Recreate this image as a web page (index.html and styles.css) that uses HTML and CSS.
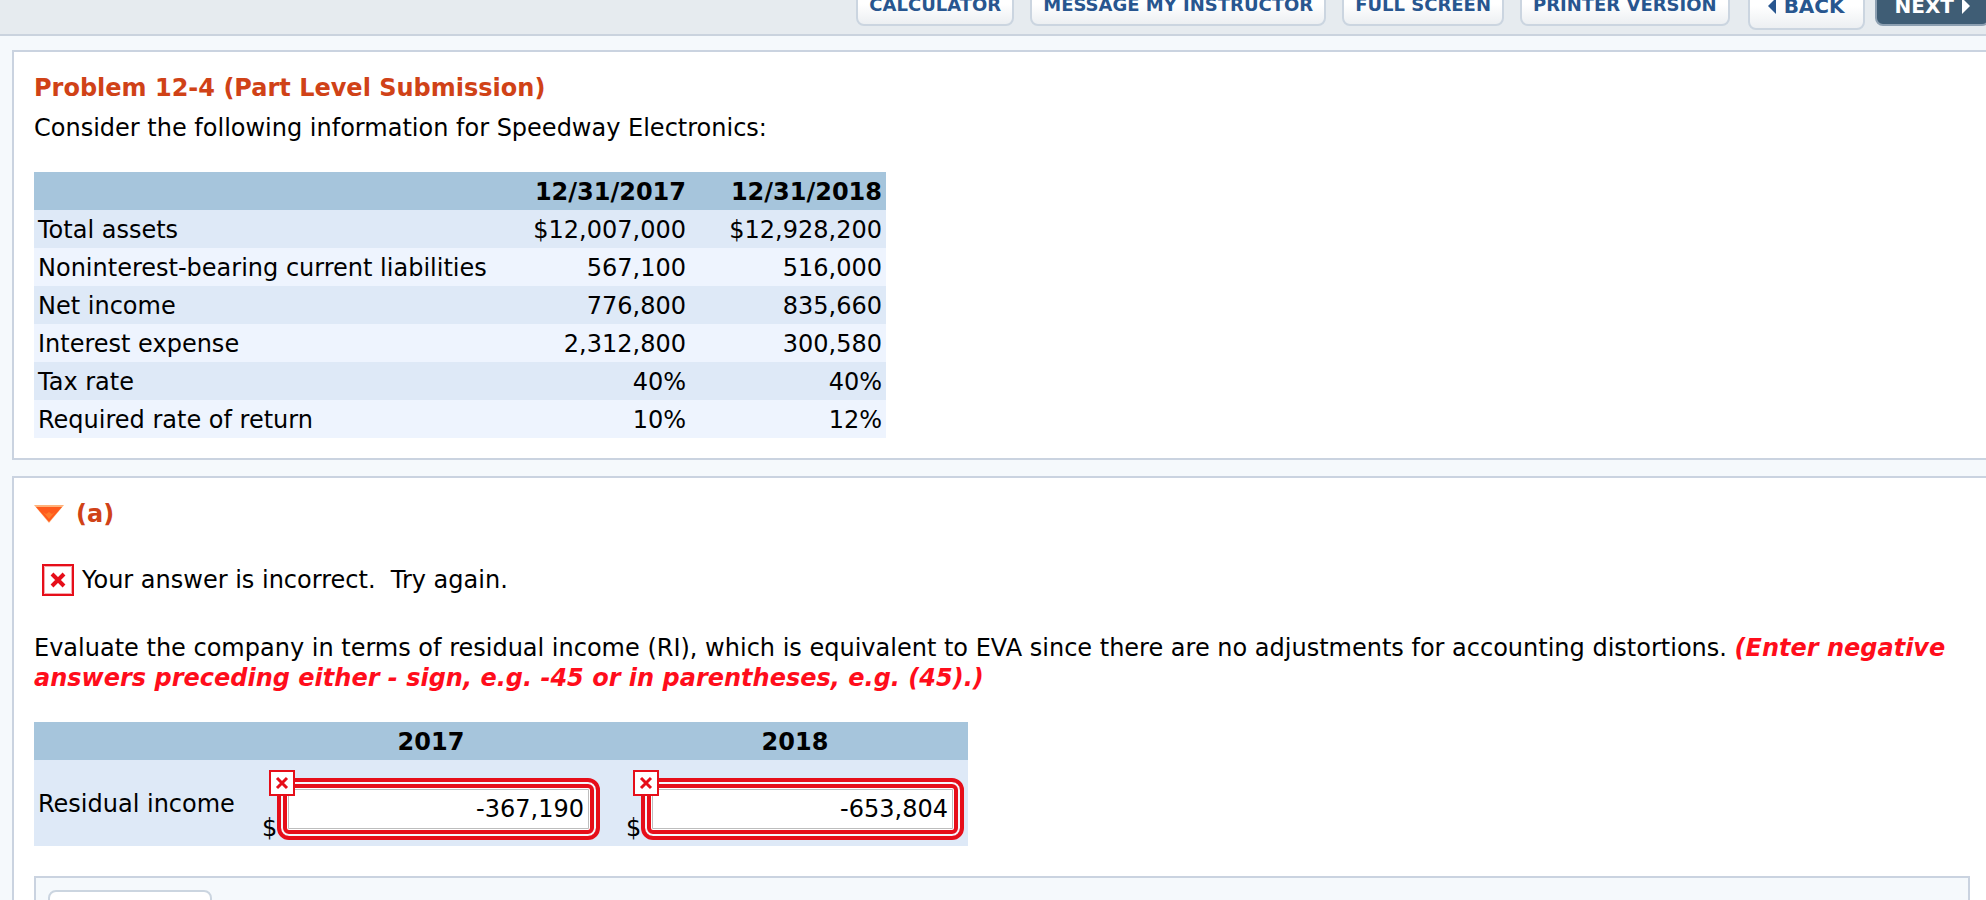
FILE: index.html
```html
<!DOCTYPE html>
<html lang="en">
  <head>
    <meta charset="UTF-8" />
    <meta name="viewport" content="width=device-width, initial-scale=1.0" />
    <title>Problem 12-4</title>
    <link rel="stylesheet" href="styles.css">
  </head>
  <body>
    <nav class="toolbar">
      <button type="button" class="tool">CALCULATOR</button>
      <button type="button" class="tool">MESSAGE MY INSTRUCTOR</button>
      <button type="button" class="tool">FULL SCREEN</button>
      <button type="button" class="tool">PRINTER VERSION</button>
      <button type="button" class="tool back">
        <svg width="8" height="16" viewBox="0 0 8 16"><path d="M8 0v16L0 8z" fill="currentColor" /></svg>
        BACK
      </button>
      <button type="button" class="tool next">
        NEXT
        <svg width="8" height="16" viewBox="0 0 8 16"><path d="M0 0v16l8-8z" fill="currentColor" /></svg>
      </button>
    </nav>

    <main class="content">
      <section class="panel">
        <h1 class="title">Problem 12-4 (Part Level Submission)</h1>
        <p class="intro">Consider the following information for Speedway Electronics:</p>

        <table class="data-table">
          <thead>
            <tr>
              <th></th>
              <th>12/31/2017</th>
              <th>12/31/2018</th>
            </tr>
          </thead>
          <tbody>
            <tr>
              <td>Total assets</td>
              <td>$12,007,000</td>
              <td>$12,928,200</td>
            </tr>
            <tr>
              <td>Noninterest-bearing current liabilities</td>
              <td>567,100</td>
              <td>516,000</td>
            </tr>
            <tr>
              <td>Net income</td>
              <td>776,800</td>
              <td>835,660</td>
            </tr>
            <tr>
              <td>Interest expense</td>
              <td>2,312,800</td>
              <td>300,580</td>
            </tr>
            <tr>
              <td>Tax rate</td>
              <td>40%</td>
              <td>40%</td>
            </tr>
            <tr>
              <td>Required rate of return</td>
              <td>10%</td>
              <td>12%</td>
            </tr>
          </tbody>
        </table>
      </section>

      <section class="panel">
        <h2 class="part">
          <svg width="30" height="18" viewBox="0 0 30 18">
            <path d="M0 0h30L15 18z" fill="#ffb27a" />
            <path d="M2 2h26L15 17z" fill="#ff5a1c" />
            <path d="M9 7l3 2 3-2 3 2 3-2-6 7z" fill="#ff7a2a" />
          </svg>
          (a)
        </h2>

        <p class="feedback">
          <svg width="32" height="32" viewBox="0 0 32 32">
            <path d="M1 1h30v30H1z" fill="#fff" stroke="#e60e19" stroke-width="2" />
            <path d="M2.500 2.500h27v27h-27z" fill="none" stroke="#f6a9ae" stroke-width="1" />
            <path d="M10 10l12 12M22 10L10 22" stroke="#e60e19" stroke-width="4" />
          </svg>
          Your answer is incorrect.&nbsp; Try again.
        </p>

        <p class="question">
          Evaluate the company in terms of residual income (RI), which is equivalent to EVA since there are no adjustments for accounting distortions.
          <em class="hint">(Enter negative answers preceding either - sign, e.g. -45 or in parentheses, e.g. (45).)</em>
        </p>

        <table class="answer-table">
          <thead>
            <tr>
              <th></th>
              <th id="y2017">2017</th>
              <th id="y2018">2018</th>
            </tr>
          </thead>
          <tbody>
            <tr>
              <td id="ri">Residual income</td>
              <td>
                <div class="answer">
                  <span class="currency">$</span>
                  <div class="field">
                    <input type="text" class="wrong" value="-367,190" aria-labelledby="ri y2017" />
                    <svg class="badge" width="26" height="26" viewBox="0 0 26 26">
                      <path d="M1 1h24v24H1z" fill="#fff" stroke="#e60e19" stroke-width="2" />
                      <path d="M8 8l10 10M18 8L8 18" stroke="#e60e19" stroke-width="3" />
                    </svg>
                  </div>
                </div>
              </td>
              <td>
                <div class="answer">
                  <span class="currency">$</span>
                  <div class="field">
                    <input type="text" class="wrong" value="-653,804" aria-labelledby="ri y2018" />
                    <svg class="badge" width="26" height="26" viewBox="0 0 26 26">
                      <path d="M1 1h24v24H1z" fill="#fff" stroke="#e60e19" stroke-width="2" />
                      <path d="M8 8l10 10M18 8L8 18" stroke="#e60e19" stroke-width="3" />
                    </svg>
                  </div>
                </div>
              </td>
            </tr>
          </tbody>
        </table>

        <div class="actions">
          <button type="button" class="action" aria-label="Save"></button>
        </div>
      </section>
    </main>
  </body>
</html>
```
FILE: styles.css
```css
* {
  box-sizing: border-box;
}

html {
  overflow-x: hidden;
  scrollbar-width: none;
}

body {
  margin: 0;
  background-color: #f5f9fc;
  color: #000;
  font-family: Verdana, "DejaVu Sans", sans-serif;
  font-size: 24px;
  line-height: 30px;
}

h1,
h2,
p {
  margin: 0;
}

/* Toolbar */
.toolbar {
  display: flex;
  justify-content: flex-end;
  align-items: flex-end;
  gap: 16px;
  height: 36px;
  margin-right: -4px;
  padding-bottom: 8px;
  border-bottom: 2px solid #cad3de;
  background-color: #e6ebef;
}

.tool {
  display: flex;
  flex-shrink: 0;
  align-items: center;
  gap: 8px;
  height: 44px;
  padding: 0 11px;
  border: 2px solid #cbd5e0;
  border-radius: 8px;
  background: linear-gradient(#fff 50%, #eceff2);
  color: #28568f;
  font-family: Verdana, "DejaVu Sans", sans-serif;
  font-size: 18px;
  font-weight: bold;
  white-space: nowrap;
  cursor: pointer;
}

.back,
.next {
  padding: 0 18px;
  font-size: 20px;
}

.back {
  height: 48px;
  margin: 0 0 -4px 2px;
}

.next {
  height: 40px;
  margin-left: -6px;
  border-color: #8da0b2;
  background: #3f5d75;
  color: #fff;
}

/* Panels */
.content {
  display: flex;
  flex-direction: column;
  gap: 16px;
  margin: 14px -6px 0 12px;
}

.panel {
  padding: 21px 20px 20px;
  border: 2px solid #cad3e0;
  background-color: #fff;
}

.title {
  color: #d04217;
  font-size: 24px;
}

.intro {
  margin: 10px 0 29px;
}

table {
  border-collapse: collapse;
}

th,
td {
  height: 38px;
  padding: 5px 4px 3px;
}

th {
  background-color: #a6c5dc;
}

tbody tr:nth-child(odd) {
  background-color: #dee9f7;
}

tbody tr:nth-child(even) {
  background-color: #eef4fe;
}

.data-table {
  width: 852px;
}

.data-table th,
.data-table td {
  text-align: right;
}

.data-table td:first-child {
  text-align: left;
}

.data-table th + th {
  width: 196px;
}

/* Part (a) */
.part {
  display: flex;
  align-items: center;
  gap: 12px;
  color: #d04217;
  font-size: 24px;
}

.feedback {
  display: flex;
  align-items: center;
  gap: 8px;
  margin: 35px 0 37px 8px;
}

.question {
  margin-bottom: 29px;
}

.hint {
  color: #ff0d1b;
  font-weight: bold;
}

.answer-table {
  width: 934px;
}

.answer-table th + th {
  width: 364px;
  padding-left: 22px;
}

.answer-table td + td {
  padding: 18px 4px 6px 22px;
}

.answer {
  display: flex;
  align-items: flex-end;
}

.currency {
  line-height: 24px;
}

.field {
  position: relative;
  flex: 1;
}

/* two red rings with a white gap, then the thin grey inner edge */
.wrong {
  display: block;
  width: 100%;
  height: 62px;
  padding: 0 12px;
  border: 4px solid #e60e19;
  border-radius: 12px;
  background-color: #fff;
  box-shadow: inset 0 0 0 2px #f4f6fb, inset 0 0 0 6px #e60e19,
    inset 0 0 0 7px #fff, inset 0 0 0 8px #bdbdbd;
  font-family: Verdana, "DejaVu Sans", sans-serif;
  font-size: 24px;
  text-align: right;
}

.badge {
  position: absolute;
  top: -8px;
  left: -8px;
}

.actions {
  margin-top: 30px;
  padding: 12px;
  border: 2px solid #cad3e0;
  background-color: #f5f9fc;
}

.action {
  display: block;
  width: 164px;
  height: 46px;
  border: 2px solid #cbd5e0;
  border-radius: 8px;
  background: linear-gradient(#fff 50%, #eceff2);
}
```
